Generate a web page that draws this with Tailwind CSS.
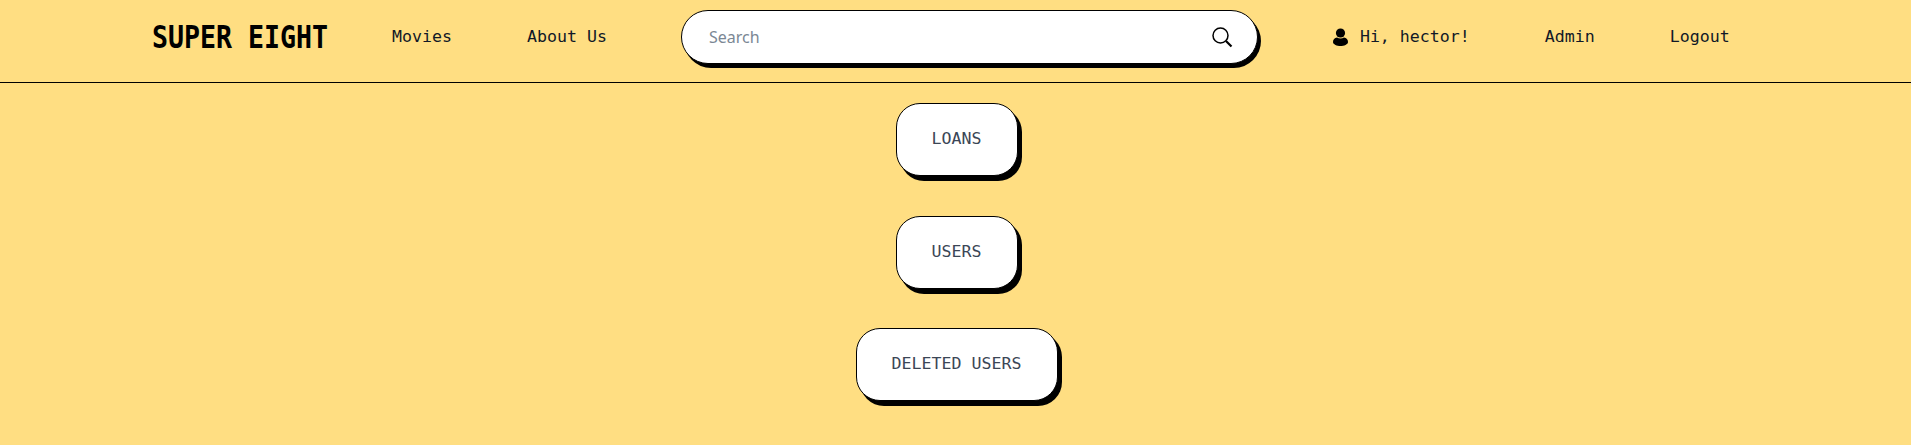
<!DOCTYPE html>
<html>

<head>
  <meta charset="utf-8">
  <meta name="viewport" content="width=device-width, initial-scale=1">
  <title>Super Eight</title>
  <script src="https://cdn.jsdelivr.net/npm/@tailwindcss/browser@4"></script>
</head>

<body class="bg-[#ffde82] min-h-screen overflow-hidden font-['DejaVu_Sans_Mono',monospace]">

  <!-- navbar -->
  <nav class="h-[83px] border-b border-black flex items-center pl-[152px] pb-[8px] text-[#111827] text-[16.6px]">
    <a href="#" class="block w-[176px] mr-[64px] shrink-0 text-black font-bold text-[26.6px] leading-none scale-y-[1.18] whitespace-nowrap">SUPER EIGHT</a>
    <a href="#" class="mr-[75px]">Movies</a>
    <a href="#" class="mr-[74px]">About Us</a>

    <form class="w-[577px] h-[54px] mr-[75px] shrink-0 bg-white border border-black rounded-[27px] shadow-[3px_4px_0_#000] flex items-center pl-[27px] pr-[24px]">
      <input type="text" placeholder="Search"
        class="flex-1 outline-none font-['Noto_Sans',sans-serif] text-base font-normal placeholder:text-[#7b8794]" />
      <svg class="w-[22px] h-[22px]" viewBox="0 0 22 22" fill="none" stroke="#000">
        <circle cx="9.500" cy="9.500" r="7.500" stroke-width="1.500" />
        <path d="M15 15l5.500 5.500" stroke-width="2.200" />
      </svg>
    </form>

    <svg class="w-[15px] h-[18px] mr-[12px]" viewBox="0 0 15 18" fill="#000">
      <circle cx="7.500" cy="5" r="4.600" />
      <path d="M4 9.500C1.500 10 0 11.500 0 14c0 2.500 4 4 7.500 4s7.500-1.500 7.500-4c0-2.500-1.500-4-4-4.500-2 1.300-5 1.300-7 0z" />
    </svg>
    <span class="mr-[75px]">Hi, hector!</span>
    <a href="#" class="mr-[75px]">Admin</a>
    <a href="#">Logout</a>
  </nav>

  <!-- admin links -->
  <main class="flex flex-col items-center gap-[39.5px] pt-[20px] pl-[2px]">
    <a href="#" class="w-[122px] h-[73px] flex items-center justify-center bg-white border border-black rounded-[24px] shadow-[4px_5px_0_#000] text-[#3b4656] text-[16.6px]">LOANS</a>
    <a href="#" class="w-[122px] h-[73px] flex items-center justify-center bg-white border border-black rounded-[24px] shadow-[4px_5px_0_#000] text-[#3b4656] text-[16.6px]">USERS</a>
    <a href="#" class="w-[202px] h-[73px] flex items-center justify-center bg-white border border-black rounded-[24px] shadow-[4px_5px_0_#000] text-[#3b4656] text-[16.6px]">DELETED USERS</a>
  </main>

</body>

</html>
